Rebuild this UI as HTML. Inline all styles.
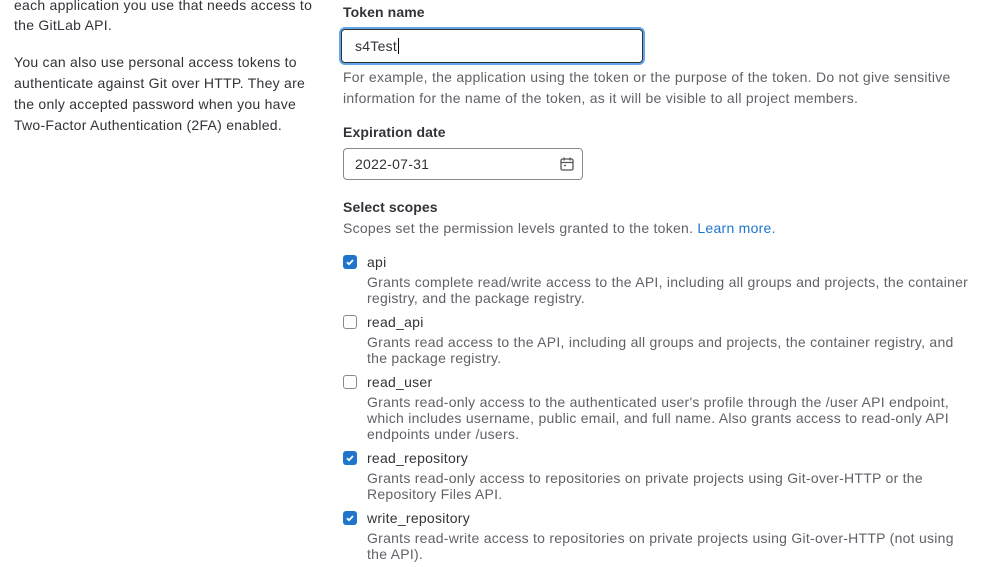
<!DOCTYPE html>
<html><head><style>
body{margin:0;width:1001px;height:567px;background:#fff;font-family:"Liberation Sans",sans-serif;font-size:14px;color:#333238;position:relative;overflow:hidden;letter-spacing:0.26px}
.t{position:absolute;white-space:nowrap;line-height:16px}
.g{color:#626168}
.b{font-weight:bold;color:#333238;letter-spacing:0.1px}
.cb{position:absolute;left:343px;width:14px;height:14px;border-radius:3px;box-sizing:border-box}
.on{background:#1f75cb}
.off{border:1px solid #89888d;background:#fff}
.inp{position:absolute;box-sizing:border-box;border-radius:4px;background:#fff}
</style></head><body>
<div class="t" style="left:14px;top:-3px">each application you use that needs access to</div>
<div class="t" style="left:14px;top:17px">the GitLab API.</div>
<div class="t" style="left:14px;top:54px">You can also use personal access tokens to</div>
<div class="t" style="left:14px;top:75px">authenticate against Git over HTTP. They are</div>
<div class="t" style="left:14px;top:96px">the only accepted password when you have</div>
<div class="t" style="left:14px;top:117px">Two-Factor Authentication (2FA) enabled.</div>

<div class="t b" style="left:343px;top:4px">Token name</div>
<div class="inp" style="left:341px;top:29px;width:302px;height:34px;border:1px solid #333;box-shadow:0 0 0 2px #63a6e9"></div>
<div class="t" style="left:355px;top:38px">s4Test<span style="border-left:1px solid #000;margin-left:1px"></span></div>
<div class="t g" style="left:343px;top:69px">For example, the application using the token or the purpose of the token. Do not give sensitive</div>
<div class="t g" style="left:343px;top:90px">information for the name of the token, as it will be visible to all project members.</div>

<div class="t b" style="left:343px;top:124px">Expiration date</div>
<div class="inp" style="left:343px;top:148px;width:240px;height:32px;border:1px solid #89888d"></div>
<div class="t" style="left:355px;top:156px">2022-07-31</div>
<svg style="position:absolute;left:559px;top:156px" width="16" height="16" viewBox="0 0 16 16" fill="none" stroke="#555" stroke-width="1.3"><rect x="2" y="3" width="12" height="11" rx="1.5"/><path d="M2 6.5h12M5 1.5v3M11 1.5v3M5 9.5h2"/></svg>

<div class="t b" style="left:343px;top:199px">Select scopes</div>
<div class="t g" style="left:343px;top:220px">Scopes set the permission levels granted to the token. <span style="color:#1f75cb">Learn more.</span></div>

<div class="cb on" style="top:255px"><svg width="14" height="14" viewBox="0 0 14 14"><path d="M4 7.2l2 2 4-4.2" stroke="#fff" stroke-width="1.8" fill="none"/></svg></div>
<div class="t" style="left:367px;top:254px">api</div>
<div class="t g" style="left:367px;top:274px">Grants complete read/write access to the API, including all groups and projects, the container</div>
<div class="t g" style="left:367px;top:290px">registry, and the package registry.</div>

<div class="cb off" style="top:315px"></div>
<div class="t" style="left:367px;top:314px">read_api</div>
<div class="t g" style="left:367px;top:334px">Grants read access to the API, including all groups and projects, the container registry, and</div>
<div class="t g" style="left:367px;top:350px">the package registry.</div>

<div class="cb off" style="top:375px"></div>
<div class="t" style="left:367px;top:374px">read_user</div>
<div class="t g" style="left:367px;top:394px">Grants read-only access to the authenticated user's profile through the /user API endpoint,</div>
<div class="t g" style="left:367px;top:410px">which includes username, public email, and full name. Also grants access to read-only API</div>
<div class="t g" style="left:367px;top:426px">endpoints under /users.</div>

<div class="cb on" style="top:451px"><svg width="14" height="14" viewBox="0 0 14 14"><path d="M4 7.2l2 2 4-4.2" stroke="#fff" stroke-width="1.8" fill="none"/></svg></div>
<div class="t" style="left:367px;top:450px">read_repository</div>
<div class="t g" style="left:367px;top:470px">Grants read-only access to repositories on private projects using Git-over-HTTP or the</div>
<div class="t g" style="left:367px;top:486px">Repository Files API.</div>

<div class="cb on" style="top:511px"><svg width="14" height="14" viewBox="0 0 14 14"><path d="M4 7.2l2 2 4-4.2" stroke="#fff" stroke-width="1.8" fill="none"/></svg></div>
<div class="t" style="left:367px;top:510px">write_repository</div>
<div class="t g" style="left:367px;top:530px">Grants read-write access to repositories on private projects using Git-over-HTTP (not using</div>
<div class="t g" style="left:367px;top:546px">the API).</div>
</body></html>
